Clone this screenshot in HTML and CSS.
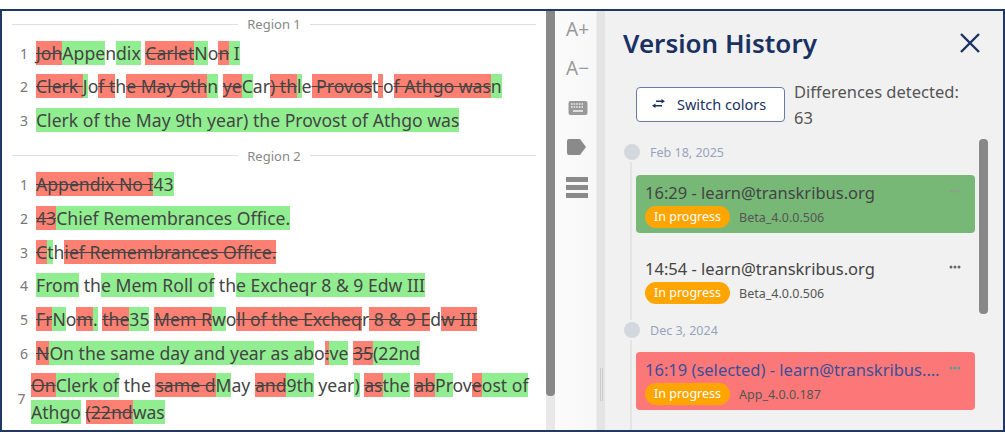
FILE: index.html
```html
<!DOCTYPE html>
<html lang="en">
<head>
    <meta charset="UTF-8">
    <title>Version History</title>
    <link rel="stylesheet" href="styles.css">
</head>
<body>
<div class="frame">
    <div class="compare">
        <div class="region-title"><span>Region 1</span></div>
        <div class="lines">
            <div class="line"><div class="num">1</div><div class="txt"><span class="d">Joh</span><span class="a">Appe</span>n<span class="a">dix</span> <span class="d">Carlet</span><span class="a">N</span>o<span class="d">n</span><span class="a"> I</span></div></div>
            <div class="line"><div class="num">2</div><div class="txt"><span class="d">Clerk </span><span class="a">J</span>o<span class="d">f t</span>h<span class="d">e May 9th</span><span class="a">n</span> <span class="d">ye</span><span class="a">C</span>ar<span class="d">) th</span><span class="a">l</span>e<span class="d"> Provos</span>t<span class="d">&nbsp;</span>o<span class="d">f Athgo was</span><span class="a">n</span></div></div>
            <div class="line"><div class="num">3</div><div class="txt"><span class="a">Clerk of the May 9th year) the Provost of Athgo was</span></div></div>
        </div>
        <div class="region-title second"><span>Region 2</span></div>
        <div class="lines">
            <div class="line"><div class="num">1</div><div class="txt"><span class="d">Appendix No I</span><span class="a">43</span></div></div>
            <div class="line"><div class="num">2</div><div class="txt"><span class="d">43</span><span class="a">Chief Remembrances Office.</span></div></div>
            <div class="line"><div class="num">3</div><div class="txt"><span class="d">C</span><span class="a">t</span>h<span class="d">ief Remembrances Office.</span></div></div>
            <div class="line"><div class="num">4</div><div class="txt"><span class="a">From</span> th<span class="a">e Mem Roll of</span> th<span class="a">e Excheqr 8 &amp; 9 Edw III</span></div></div>
            <div class="line"><div class="num">5</div><div class="txt"><span class="d">Fr</span><span class="a">N</span>o<span class="d">m</span><span class="a">.</span> <span class="d">the</span><span class="a">35</span> <span class="d">Mem R</span><span class="a">w</span>o<span class="d">ll of the Excheq</span>r<span class="d"> 8 &amp; 9 E</span>d<span class="d">w III</span></div></div>
            <div class="line"><div class="num">6</div><div class="txt"><span class="d">N</span><span class="a">On the same day and year as ab</span>o<span class="d">:</span><span class="a">ve</span> <span class="d">35</span><span class="a">(22nd</span></div></div>
            <div class="line long"><div class="num">7</div><div class="txt"><span class="d">On</span><span class="a">Clerk of</span> the <span class="d">same d</span><span class="a">M</span>ay <span class="d">and</span><span class="a">9th</span> year<span class="a">)</span> <span class="d">as</span><span class="a">the</span> <span class="d">ab</span><span class="a">Pr</span>ov<span class="d">e</span><span class="a">ost of</span> <span class="a">Athgo</span> <span class="d">(22nd</span><span class="a">was</span></div></div>
        </div>
    </div>
    <div class="pane-scroll"><div class="pane-thumb"></div></div>
    <div class="tools">
        <div class="tool-a">A+</div>
        <div class="tool-a">A&minus;</div>
        <svg class="tool-icon" width="20" height="14" viewBox="0 0 20 14"><rect width="19" height="14" x="0.5" rx="2" fill="#999"/><path d="M3 3h13M3 6h13" stroke="#eee" stroke-width="1.6" stroke-dasharray="1.6 1"/><path d="M5 10h10" stroke="#eee" stroke-width="1.6"/></svg>
        <svg class="tool-icon" width="20" height="16" viewBox="0 0 20 16"><path d="M2 0h11l6 8-6 8H2a2 2 0 0 1-2-2V2a2 2 0 0 1 2-2z" fill="#8a8a8a"/></svg>
        <svg class="tool-icon" width="22" height="21" viewBox="0 0 22 21"><path d="M0 0h22v5H0zM0 8h22v5H0zM0 16h22v5H0z" fill="#8a8a8a"/></svg>
        <div class="grip"></div>
    </div>
    <div class="history">
        <div class="head">
            <h1>Version History</h1>
            <svg width="22" height="22" viewBox="0 0 22 22"><path d="M2 2l18 18M20 2L2 20" stroke="#1a3263" stroke-width="2.4" fill="none"/></svg>
        </div>
        <div class="actions">
            <button class="switch">
                <svg width="13" height="9" viewBox="0 0 13 9"><path d="M4 2.2h6M10 6.8H3" stroke="#1a3263" stroke-width="1.4"/><path d="M9.5 0l3.5 2.2-3.5 2.2zM3.5 4.6L0 6.8 3.5 9z" fill="#1a3263"/></svg>
                Switch colors
            </button>
            <div class="diff-count">Differences detected: 63</div>
        </div>
        <div class="timeline">
            <div class="groups">
                <div class="date"><i></i>Feb 18, 2025</div>
                <div class="entries">
                    <div class="entry green">
                        <div class="entry-top"><span class="who">16:29 - learn@transkribus.org</span><svg class="more" width="12" height="4" viewBox="0 0 12 4"><circle cx="2" cy="2" r="1.5"/><circle cx="6" cy="2" r="1.5"/><circle cx="10" cy="2" r="1.5"/></svg></div>
                        <div class="entry-sub"><span class="badge">In progress</span><span class="ver">Beta_4.0.0.506</span></div>
                    </div>
                    <div class="entry">
                        <div class="entry-top"><span class="who">14:54 - learn@transkribus.org</span><svg class="more" width="12" height="4" viewBox="0 0 12 4"><circle cx="2" cy="2" r="1.5"/><circle cx="6" cy="2" r="1.5"/><circle cx="10" cy="2" r="1.5"/></svg></div>
                        <div class="entry-sub"><span class="badge">In progress</span><span class="ver">Beta_4.0.0.506</span></div>
                    </div>
                </div>
                <div class="date"><i></i>Dec 3, 2024</div>
                <div class="entries">
                    <div class="entry red">
                        <div class="entry-top"><span class="who">16:19 (selected) - learn@transkribus.org</span><svg class="more" width="12" height="4" viewBox="0 0 12 4"><circle cx="2" cy="2" r="1.5"/><circle cx="6" cy="2" r="1.5"/><circle cx="10" cy="2" r="1.5"/></svg></div>
                        <div class="entry-sub"><span class="badge">In progress</span><span class="ver">App_4.0.0.187</span></div>
                    </div>
                </div>
            </div>
            <div class="list-thumb"></div>
        </div>
    </div>
</div>
</body>
</html>
```

FILE: styles.css
```css
*{margin: 0;padding: 0;box-sizing: border-box;}
html,body{background: #fff;overflow: hidden;}
body{padding-top: 9px;font-family: "Noto Sans", "Liberation Sans", sans-serif;color: #444;}
.frame{display: flex;width: 1005px;height: 423px;border: 2px solid #1f3864;overflow: hidden;}

.compare{flex: 0 0 544px;padding: 3px 10px 0 10px;background: #fff;}
.region-title{display: flex;align-items: center;gap: 9px;height: 20px;margin-bottom: 5.5px;font-size: 13px;color: #888;}
.region-title.second{margin-top: 12px;}
.region-title:before,.region-title:after{content: "";flex: 1;border-top: 1.5px solid #e0e0e0;}
.lines{display: flex;flex-direction: column;gap: 6.7px;}
.line{display: flex;align-items: center;font-size: 17.6px;line-height: 27px;}
.num{flex: 0 0 24px;font-size: 14px;color: #777;text-align: center;}
.txt{white-space: pre-wrap;}
.long{margin-top: -2px;}
.long .num{flex-basis: 19px;}
.d{background: #fd8072;text-decoration: line-through;}
.a{background: #90ee90;}

.pane-scroll{flex: 0 0 9px;background: #e8e8e8;}
.pane-thumb{height: 385px;background: #888;border-radius: 0 0 4px 4px;}

.tools{position: relative;display: flex;flex: 0 0 50px;flex-direction: column;align-items: flex-start;padding: 0 0 0 11px;background: linear-gradient(to right, #fbfbfb 0, #f7f7f7 82%, #e4e4e4 84%, #e4e4e4 100%);}
.tool-a{height: 39px;font-size: 19px;line-height: 36px;color: #999;}
.tool-icon{display: block;margin-bottom: 25px;}
.tool-icon:nth-child(3){margin-top: 12px;margin-left: 2px;margin-bottom: 24px;}
.tool-icon:nth-child(4){margin-left: 1px;margin-bottom: 22px;}
.grip{position: absolute;left: 45px;top: 357px;width: 3px;height: 33px;border-left: 1px solid #ccc;border-right: 1px solid #ccc;}

.history{flex: 1;padding: 0 0 0 18px;background: #f1f1f1;}
.head{display: flex;align-items: center;justify-content: space-between;height: 46px;margin-top: 9px;padding-right: 22px;}
.head h1{font-size: 26px;font-weight: 600;line-height: 46px;color: #1a3263;}
.actions{display: flex;gap: 9px;margin: 21px 0 0 13px;width: 330px;}
.switch{display: flex;align-items: center;flex: 0 0 149px;gap: 12px;height: 35px;padding: 0 0 2px 15px;border: 1px solid #6a7ba0;border-radius: 4px;background: #fff;font-family: inherit;font-size: 14.5px;color: #1a3263;}
.diff-count{width: 175px;margin-top: -8px;font-size: 16.5px;line-height: 26px;color: #555;}

.timeline{display: flex;gap: 4px;margin-top: 8px;}
.groups{flex: 0 0 352px;min-width: 0;padding-top: 3px;}
.date{display: flex;align-items: center;gap: 10px;height: 20px;font-size: 12.5px;color: #98a4bb;}
.date i{flex: 0 0 16px;height: 16px;margin-left: 1px;border-radius: 50%;background: #d3d7de;}
.entries{display: flex;flex-direction: column;gap: 18px;margin-left: 7px;padding: 13px 0 11px 4px;border-left: 2px solid #e4e4e4;}
.entries:last-child{height: 120px;padding-top: 12px;}
.entry{flex: 0 0 58px;min-width: 0;padding: 5px 9px 0;border-radius: 4px;}
.entry.green{background: #77b877;}
.entry.red{background: #fc7878;}
.entry-top{display: flex;align-items: center;gap: 8px;height: 24px;}
.who{flex: 1;min-width: 0;overflow: hidden;white-space: nowrap;text-overflow: ellipsis;font-size: 16.5px;color: #444;}
.more{flex: 0 0 12px;margin: -2px 5px 0 0;fill: #666;}
.green .more{fill: #8f9f8f;}
.red .who{color: #3a4f9a;}
.red .more{fill: #5f9f8f;}
.entry-sub{display: flex;align-items: center;gap: 9px;margin-top: 2px;}
.badge{height: 22px;padding: 0 9px;border-radius: 11px;background: #ffa500;font-size: 12.5px;line-height: 22px;color: #fff;}
.ver{font-size: 12.5px;color: #555;}
.list-thumb{flex: 0 0 9px;height: 175px;background: #888;border-radius: 4px;}
```
